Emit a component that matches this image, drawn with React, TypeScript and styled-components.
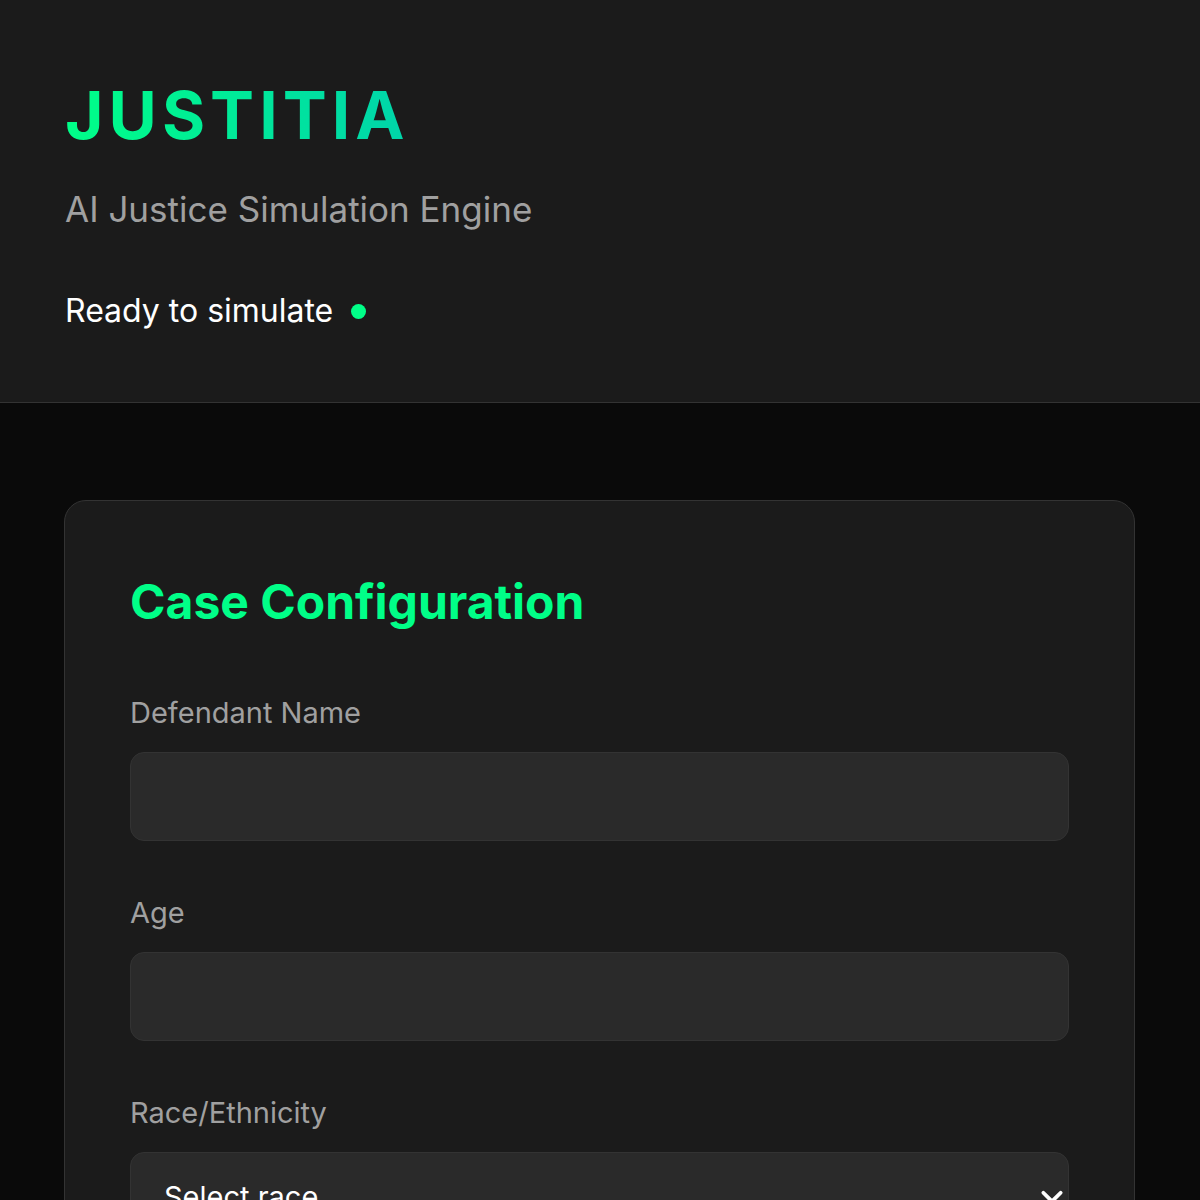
import React from "react";
import styled, { createGlobalStyle } from "styled-components";

const Global = createGlobalStyle`
  html, body { margin: 0; padding: 0; background: #0a0a0a; }
  body { font-family: Inter, "Noto Sans", "Liberation Sans", sans-serif; color: #fff; }
  * { box-sizing: border-box; }
`;

const Page = styled.div`
  min-height: 1200px;
  background: #0a0a0a;
`;

const Header = styled.header`
  background: #1b1b1b;
  border-bottom: 1px solid #333;
  padding: 76px 65px 71px;
  display: flex;
  flex-direction: column;
`;

const Logo = styled.h1`
  margin: 0;
  font-size: 66px;
  line-height: 1.2;
  font-weight: 700;
  letter-spacing: 5px;
  background: linear-gradient(90deg, #00ff88 0%, #00d4aa 100%);
  -webkit-background-clip: text;
  background-clip: text;
  color: transparent;
  align-self: flex-start;
`;

const Subtitle = styled.p`
  margin: 33px 0 0;
  font-size: 35px;
  line-height: 1.2;
  color: #a0a0a0;
`;

const Status = styled.div`
  margin-top: 62px;
  display: flex;
  align-items: center;
  gap: 18px;
  font-size: 32px;
  line-height: 1.2;
  color: #fff;
`;

const Dot = styled.span`
  width: 15px;
  height: 15px;
  border-radius: 50%;
  background: #00ff88;
`;

const Main = styled.main`
  padding: 97px 65px 0 64px;
`;

const Card = styled.section`
  background: #1b1b1b;
  border: 1px solid #333;
  border-radius: 22px;
  padding: 72px 65px 60px;
`;

const CardTitle = styled.h2`
  margin: 0 0 66px;
  font-size: 48px;
  line-height: 1.2;
  font-weight: 700;
  color: #00ff88;
`;

const Field = styled.div`
  display: flex;
  flex-direction: column;
  margin-bottom: 55px;
`;

const Label = styled.label`
  font-size: 29px;
  line-height: 1.2;
  color: #a0a0a0;
  margin-bottom: 21px;
`;

const Input = styled.input`
  height: 89px;
  background: #2a2a2a;
  border: 1px solid #333;
  border-radius: 14px;
  padding: 0 33px;
  font-family: inherit;
  font-size: 29px;
  color: #fff;
  outline: none;
`;

const SelectWrap = styled.div`
  position: relative;
`;

const Select = styled.select`
  width: 100%;
  height: 89px;
  appearance: none;
  background: #2a2a2a;
  border: 1px solid #333;
  border-radius: 14px;
  padding: 0 33px;
  font-family: inherit;
  font-size: 29px;
  color: #fff;
  outline: none;
`;

const Chevron = styled.svg`
  position: absolute;
  right: 4px;
  top: 31px;
  width: 26px;
  height: 26px;
  pointer-events: none;
`;

export default function App() {
  return (
    <Page>
      <Global />
      <Header>
        <Logo>JUSTITIA</Logo>
        <Subtitle>AI Justice Simulation Engine</Subtitle>
        <Status>
          Ready to simulate
          <Dot />
        </Status>
      </Header>
      <Main>
        <Card>
          <CardTitle>Case Configuration</CardTitle>
          <Field>
            <Label>Defendant Name</Label>
            <Input type="text" />
          </Field>
          <Field>
            <Label>Age</Label>
            <Input type="number" />
          </Field>
          <Field>
            <Label>Race/Ethnicity</Label>
            <SelectWrap>
              <Select defaultValue="">
                <option value="">Select race</option>
              </Select>
              <Chevron viewBox="0 0 24 24" fill="none" stroke="#fff" strokeWidth="3.5" strokeLinecap="round" strokeLinejoin="round">
                <path d="M4 9l8 8 8-8" />
              </Chevron>
            </SelectWrap>
          </Field>
        </Card>
      </Main>
    </Page>
  );
}
